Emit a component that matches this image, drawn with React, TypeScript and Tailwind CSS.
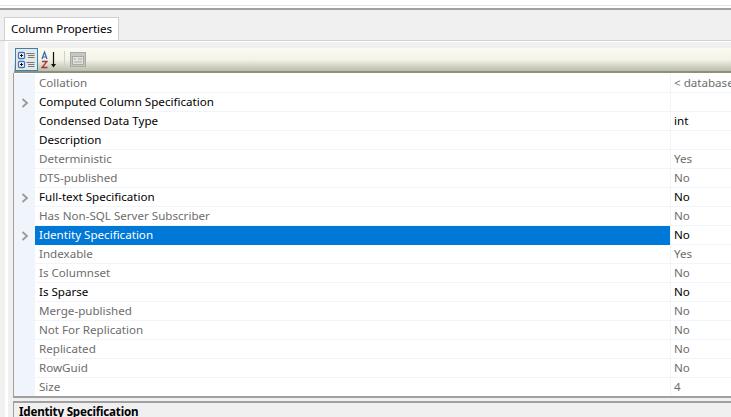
const rows = [
  { name: "Collation", value: "<database", active: false },
  { name: "Computed Column Specification", value: "", active: true, expand: true },
  { name: "Condensed Data Type", value: "int", active: true },
  { name: "Description", value: "", active: true },
  { name: "Deterministic", value: "Yes", active: false },
  { name: "DTS-published", value: "No", active: false },
  { name: "Full-text Specification", value: "No", active: true, expand: true },
  { name: "Has Non-SQL Server Subscriber", value: "No", active: false },
  { name: "Identity Specification", value: "No", active: true, expand: true, selected: true },
  { name: "Indexable", value: "Yes", active: false },
  { name: "Is Columnset", value: "No", active: false },
  { name: "Is Sparse", value: "No", active: true },
  { name: "Merge-published", value: "No", active: false },
  { name: "Not For Replication", value: "No", active: false },
  { name: "Replicated", value: "No", active: false },
  { name: "RowGuid", value: "No", active: false },
  { name: "Size", value: "4", active: false },
]

function Chevron() {
  return (
    <svg width="8" height="10" viewBox="0 0 8 10" fill="none">
      <path d="M1.5 1 L6 5 L1.5 9" stroke="#9a9a9a" strokeWidth="1.8" />
    </svg>
  )
}

function CategorizedIcon() {
  return (
    <svg width="20" height="20" viewBox="0 0 20 20" fill="none">
      <rect x="1.5" y="2.5" width="6" height="6" rx="1" fill="#fff" stroke="#3f78bf" strokeWidth="1.3" />
      <path d="M3 5.5h3M4.5 4v3" stroke="#111" />
      <rect x="1.5" y="11.5" width="6" height="6" rx="1" fill="#fff" stroke="#3f78bf" strokeWidth="1.3" />
      <path d="M3 14.5h3M4.5 13v3" stroke="#111" />
      <path d="M9.5 3.5h8M11 5.5h6.5M11 7.5h6.5M9.5 12.5h8M11 14.5h6.5M11 16.5h6.5" stroke="#777" />
    </svg>
  )
}

function SortIcon() {
  return (
    <svg width="18" height="20" viewBox="0 0 18 20" fill="none">
      <path d="M1 9 L3.5 2 L6 9 M2 7h3" stroke="#3563b5" strokeWidth="1.2" />
      <path d="M1 11.5h5 L1 17.5h5.5" stroke="#a5343a" strokeWidth="1.3" />
      <path d="M12.5 2v14" stroke="#111" strokeWidth="1.2" />
      <path d="M10 14h5l-2.5 3.5z" fill="#111" />
    </svg>
  )
}

function PagesIcon() {
  return (
    <svg width="16" height="16" viewBox="0 0 16 16" fill="none">
      <rect x="0.5" y="0.5" width="15" height="14" fill="#c6c6c2" stroke="#a8a8a4" />
      <rect x="2.5" y="4.5" width="11" height="8" fill="#e2e2de" stroke="#a8a8a4" />
      <path d="M4 7h2M8 7h4M4 10h8" stroke="#a8a8a4" />
    </svg>
  )
}

export default function App() {
  return (
    <div className="w-[731px] h-[417px] overflow-hidden bg-[#f0f0f0] text-[11.6px] font-['Noto_Sans','Open_Sans',sans-serif] text-black">
      <div className="h-[10px] bg-white border-b-[2px] border-[#a0a0a0] relative">
        <div className="h-px mt-[5px] bg-[#e4e4e4] absolute top-0 left-0 right-0" />
      </div>
      <div className="pt-[7px] pl-[4px]">
        <div className="w-[115px] h-[23px] bg-white border border-b-0 border-[#d0d0d0] flex items-center justify-center tracking-[-0.05px]">
          Column Properties
        </div>
      </div>
      <div className="border-t border-[#d0d0d0]">
        <div className="ml-[5px] pl-[3px] pt-px bg-white">
          <div className="bg-[#f0f0f0] pt-[6px] pl-[5px]">
            <div className="h-[25px] ml-px flex items-center border-b-[2px] border-[#8f8f80] bg-gradient-to-b from-[#fbfbf2] via-[#f3f3e8] to-[#bdbdac]">
              <div className="w-[23px] h-[23px] ml-px border border-[#3c7fb1] bg-[#e4e8e6] flex items-center justify-center">
                <CategorizedIcon />
              </div>
              <div className="ml-[3px]">
                <SortIcon />
              </div>
              <div className="w-px h-[17px] bg-[#d0d0c4] mx-[5px]" />
              <PagesIcon />
            </div>
            <div className="h-[325px] border-l border-b-2 border-[#a0a0a0] bg-white overflow-hidden pt-px">
              {rows.map((r) => (
                <div key={r.name} className="flex h-[19px]">
                  <div className="w-[21px] bg-[#f0f4fb] flex items-center justify-center shrink-0">
                    {r.expand && <Chevron />}
                  </div>
                  <div
                    className={`w-[635px] pl-[4px] flex items-center border-b whitespace-nowrap shrink-0 ${
                      r.selected ? "bg-[#0078d7] text-white border-[#0078d7]" : "border-[#f0f4fb]"
                    } ${!r.active ? "text-[#6d6d6d]" : ""}`}
                  >
                    {r.name}
                  </div>
                  <div
                    className={`flex-1 pl-[3px] flex items-center border-l border-b border-[#f0f4fb] whitespace-nowrap ${
                      r.active ? "" : "text-[#6d6d6d]"
                    }`}
                  >
                    {r.value === "<database" ? "< database" : r.value}
                  </div>
                </div>
              ))}
            </div>
            <div className="mt-[3px] h-[20px] border-l border-t-2 border-[#a0a0a0] pl-[5px] font-bold leading-[17px] tracking-[-0.2px]">
              Identity Specification
            </div>
          </div>
        </div>
      </div>
    </div>
  )
}
